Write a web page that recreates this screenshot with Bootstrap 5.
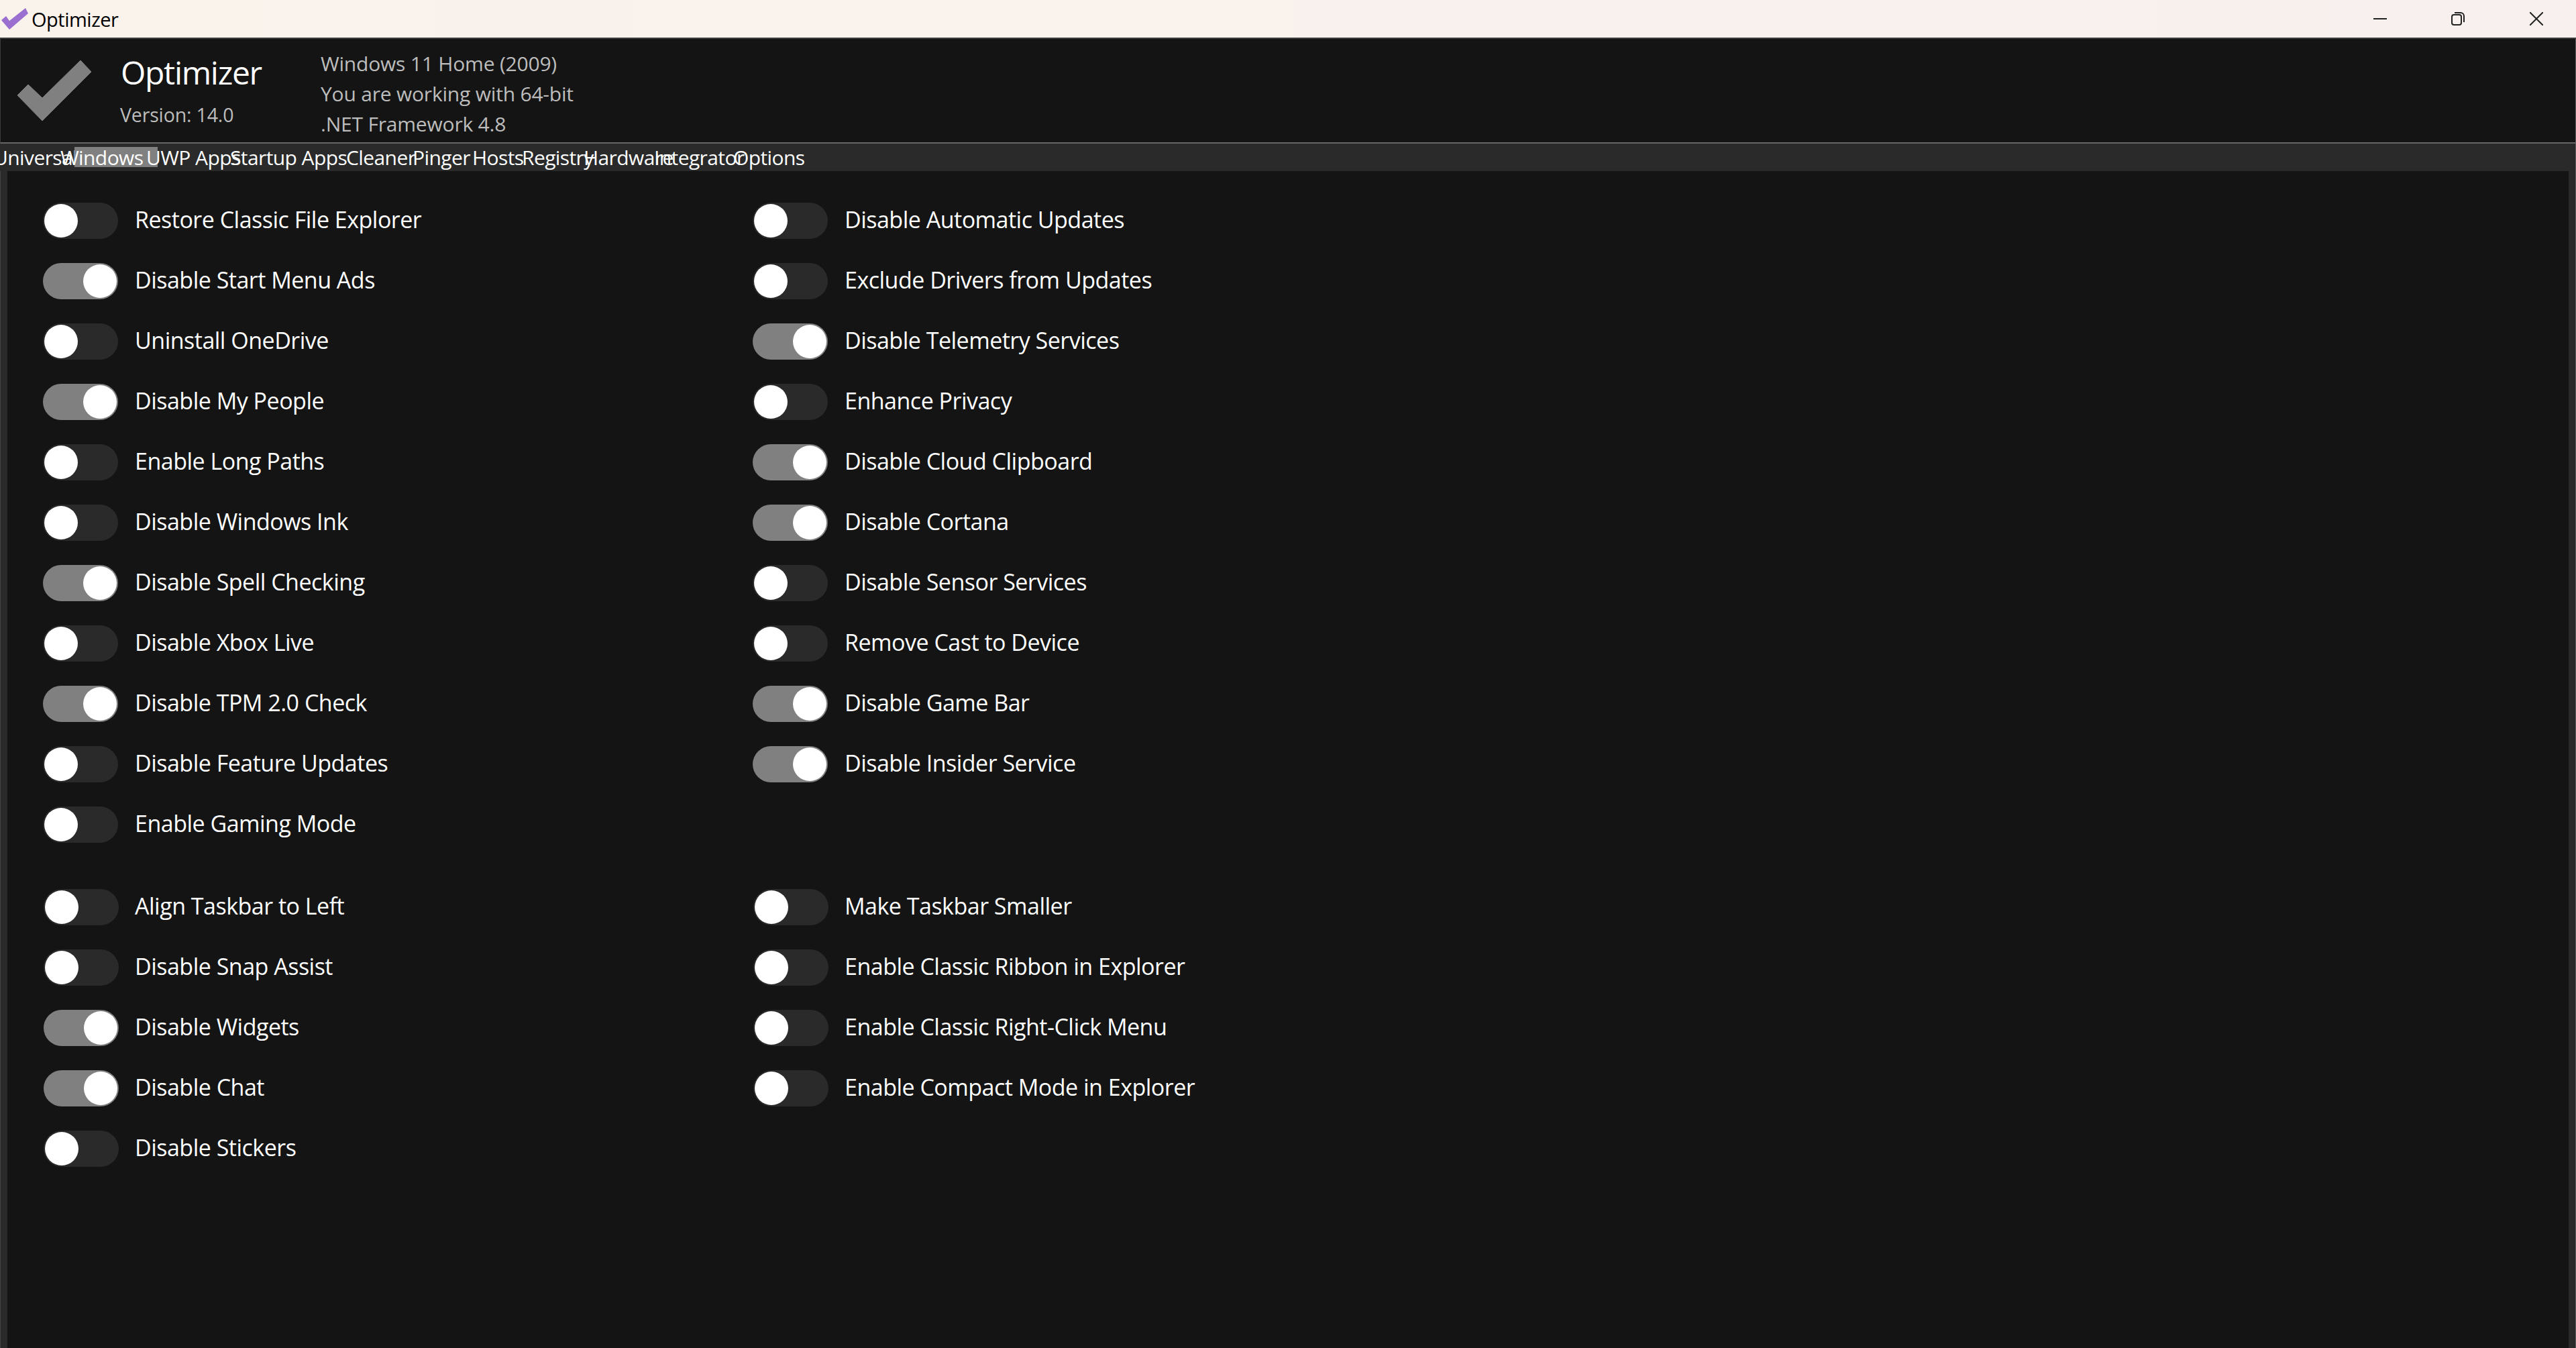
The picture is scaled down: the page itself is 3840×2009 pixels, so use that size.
<!doctype html>
<html lang="en"><head><meta charset="utf-8"><title>Optimizer</title>
<link href="https://cdn.jsdelivr.net/npm/bootstrap@5.3.0/dist/css/bootstrap.min.css" rel="stylesheet">
<style>
html,body{height:100%;overflow:hidden}
body{background:#141414;color:#fff;font-family:"Open Sans","Noto Sans",sans-serif}
.app-shell{height:2009px;border-right:1px solid #5e5e5e}
.title-strip{height:58px;margin-right:-1px;background:linear-gradient(90deg,#faf3ec,#f7f0ee);border-bottom:2px solid #3c3c3c;color:#000;font-size:29px}
.title-strip .app-name{margin-left:5px;letter-spacing:-.5px;padding-top:2px}
.win-group{margin-right:1px}
.win-btn{width:117px;height:54px;display:flex;align-items:center;justify-content:center}
.win-btn.narrow{width:115px}
.head-band{height:156px;border-bottom:2px solid #666;border-left:1px solid #3c3c3c}
.head-logo{margin-left:25px;width:110px;height:90px;flex:none}
.head-names{margin-left:45px;width:297px;padding-bottom:4px}
.brand-big{font-size:48px;line-height:60px;font-weight:500;letter-spacing:-1.3px;margin-left:-1px}
.brand-ver{font-size:28.5px;line-height:36px;color:#bdbdbd;margin-top:15px;letter-spacing:-.15px;margin-left:-2px}
.head-info{font-size:30px;line-height:45px;color:#bdbdbd;letter-spacing:-.2px;padding-top:8px}
.tab-strip{height:41px;background:#2a2a2a;font-size:30px;line-height:41px;white-space:nowrap;overflow:hidden}
.tab-item{flex:none;position:relative;color:#fff;letter-spacing:-.6px;font-weight:500}
.tab-item.is-active::before{content:"";position:absolute;left:21px;width:124px;top:5px;height:30px;background:#808080}
.tab-item span{position:relative}
.tw-100{width:100px;margin-left:-10px}.tw-128{width:128px}.tw-125{width:125px}.tw-173{width:173px}.tw-99{width:99px}.tw-89{width:89px}.tw-74{width:74px}.tw-92{width:92px}.tw-105{width:105px}.tw-118{width:118px}
.body-area{border-left:1px solid #444}
.side-strip{width:10px;background:#2a2a2a;flex:none}
.form-panel{padding:29px 0 0 53px;flex:1 1 auto}
.opt-col{width:1058px;flex:none}
.opt-group{margin-bottom:33px}
.opt-row{height:90px;display:flex;align-items:center;font-size:34px;letter-spacing:-.5px;font-weight:500;padding-bottom:4px}
.opt-switch{width:112px;height:54px;border-radius:27px;background:#2a2a2a;position:relative;margin:4px 25px 0 0;flex:none}
.opt-switch::after{content:"";position:absolute;width:50px;height:50px;border-radius:50%;background:#fff;top:2px;left:2px}
.opt-switch.is-on{background:#808080}
.opt-switch.is-on::after{left:60px}
.opt-later .opt-switch{margin-left:1px;margin-right:24px}
</style></head><body>
<div class="app-shell d-flex flex-column">
<div class="title-strip d-flex align-items-center">
<svg width="42" height="34" viewBox="0 0 42 34"><path d="M2 19 9 13 14 20 38 1 42 9 14 33Z" fill="#9b6fd0"/></svg>
<span class="app-name">Optimizer</span>
<div class="win-group d-flex ms-auto">
<div class="win-btn narrow"><svg width="20" height="2"><rect width="20" height="2" fill="#222"/></svg></div>
<div class="win-btn"><svg width="20" height="20" fill="none" stroke="#222" stroke-width="2"><rect x="1" y="4" width="14" height="15" rx="3"/><path d="M5 1h9a5 5 0 0 1 5 5v9"/></svg></div>
<div class="win-btn"><svg width="20" height="20" stroke="#222" stroke-width="2"><path d="M0 0 20 20M20 0 0 20"/></svg></div>
</div></div>
<div class="head-band d-flex align-items-center">
<svg class="head-logo" viewBox="0 0 110 90"><path d="M0 52 16 36 37 56 94 0 110 17 37 90Z" fill="#808080" stroke="#808080" stroke-width="1" stroke-linejoin="round"/></svg>
<div class="head-names"><div class="brand-big">Optimizer</div><div class="brand-ver">Version: 14.0</div></div>
<div class="head-info"><div>Windows 11 Home (2009)</div><div>You are working with 64-bit</div><div>.NET Framework 4.8</div></div>
</div>
<div class="tab-strip d-flex">
<div class="tab-item tw-100"><span>Universal</span></div>
<div class="tab-item tw-128 is-active"><span>Windows</span></div>
<div class="tab-item tw-125"><span>UWP Apps</span></div>
<div class="tab-item tw-173"><span>Startup Apps</span></div>
<div class="tab-item tw-99"><span>Cleaner</span></div>
<div class="tab-item tw-89"><span>Pinger</span></div>
<div class="tab-item tw-74"><span>Hosts</span></div>
<div class="tab-item tw-92"><span>Registry</span></div>
<div class="tab-item tw-105"><span>Hardware</span></div>
<div class="tab-item tw-118"><span>Integrator</span></div>
<div class="tab-item"><span>Options</span></div>
</div>
<div class="body-area d-flex flex-grow-1">
<div class="side-strip"></div>
<div class="form-panel">
<div class="d-flex opt-group">
<div class="opt-col">
<div class="opt-row"><span class="opt-switch"></span>Restore Classic File Explorer</div>
<div class="opt-row"><span class="opt-switch is-on"></span>Disable Start Menu Ads</div>
<div class="opt-row"><span class="opt-switch"></span>Uninstall OneDrive</div>
<div class="opt-row"><span class="opt-switch is-on"></span>Disable My People</div>
<div class="opt-row"><span class="opt-switch"></span>Enable Long Paths</div>
<div class="opt-row"><span class="opt-switch"></span>Disable Windows Ink</div>
<div class="opt-row"><span class="opt-switch is-on"></span>Disable Spell Checking</div>
<div class="opt-row"><span class="opt-switch"></span>Disable Xbox Live</div>
<div class="opt-row"><span class="opt-switch is-on"></span>Disable TPM 2.0 Check</div>
<div class="opt-row"><span class="opt-switch"></span>Disable Feature Updates</div>
<div class="opt-row"><span class="opt-switch"></span>Enable Gaming Mode</div>
</div>
<div class="opt-col">
<div class="opt-row"><span class="opt-switch"></span>Disable Automatic Updates</div>
<div class="opt-row"><span class="opt-switch"></span>Exclude Drivers from Updates</div>
<div class="opt-row"><span class="opt-switch is-on"></span>Disable Telemetry Services</div>
<div class="opt-row"><span class="opt-switch"></span>Enhance Privacy</div>
<div class="opt-row"><span class="opt-switch is-on"></span>Disable Cloud Clipboard</div>
<div class="opt-row"><span class="opt-switch is-on"></span>Disable Cortana</div>
<div class="opt-row"><span class="opt-switch"></span>Disable Sensor Services</div>
<div class="opt-row"><span class="opt-switch"></span>Remove Cast to Device</div>
<div class="opt-row"><span class="opt-switch is-on"></span>Disable Game Bar</div>
<div class="opt-row"><span class="opt-switch is-on"></span>Disable Insider Service</div>
</div>
</div>
<div class="d-flex opt-later">
<div class="opt-col">
<div class="opt-row"><span class="opt-switch"></span>Align Taskbar to Left</div>
<div class="opt-row"><span class="opt-switch"></span>Disable Snap Assist</div>
<div class="opt-row"><span class="opt-switch is-on"></span>Disable Widgets</div>
<div class="opt-row"><span class="opt-switch is-on"></span>Disable Chat</div>
<div class="opt-row"><span class="opt-switch"></span>Disable Stickers</div>
</div>
<div class="opt-col">
<div class="opt-row"><span class="opt-switch"></span>Make Taskbar Smaller</div>
<div class="opt-row"><span class="opt-switch"></span>Enable Classic Ribbon in Explorer</div>
<div class="opt-row"><span class="opt-switch"></span>Enable Classic Right-Click Menu</div>
<div class="opt-row"><span class="opt-switch"></span>Enable Compact Mode in Explorer</div>
</div>
</div>
</div>
<div class="side-strip"></div>
</div>
</div>
</body></html>
